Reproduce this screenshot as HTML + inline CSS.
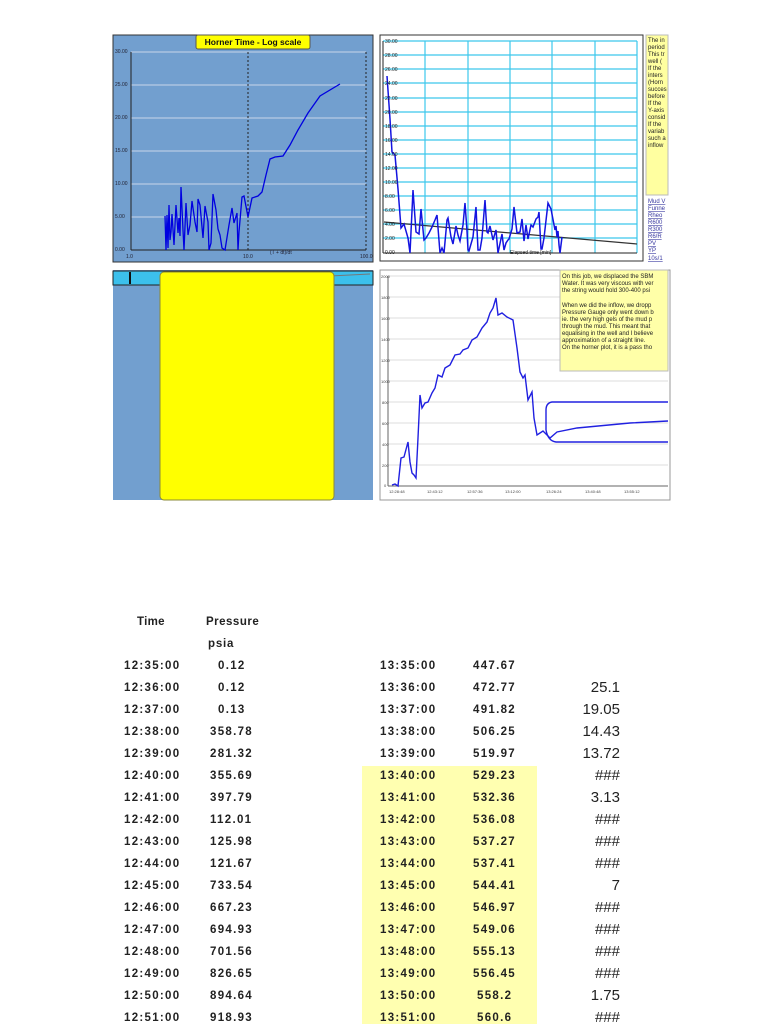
<!DOCTYPE html>
<html><head><meta charset="utf-8"><style>
body{margin:0;width:768px;height:1024px;background:#fff;position:relative;overflow:hidden;font-family:"Liberation Sans",sans-serif}
.a{position:absolute}
.t{position:absolute;font-size:11.5px;font-weight:bold;color:#222;letter-spacing:1.3px;white-space:nowrap}
.r{position:absolute;font-size:15px;color:#222;white-space:nowrap;text-align:right;width:60px;left:560px}
</style></head><body>
<svg class="a" style="left:0;top:0" width="768" height="510" font-family="Liberation Sans,sans-serif">
<rect x="113" y="35" width="260" height="227" fill="#729fcf" stroke="#333" stroke-width="1"/>
<g stroke="#c8d6e8" stroke-width="1">
<line x1="131" y1="52" x2="366" y2="52"/><line x1="131" y1="85" x2="366" y2="85"/><line x1="131" y1="118" x2="366" y2="118"/><line x1="131" y1="151" x2="366" y2="151"/><line x1="131" y1="184" x2="366" y2="184"/><line x1="131" y1="217" x2="366" y2="217"/></g>
<line x1="248" y1="52" x2="248" y2="250" stroke="#222" stroke-dasharray="2,2"/>
<line x1="366" y1="52" x2="366" y2="250" stroke="#222" stroke-dasharray="2,2"/>
<line x1="131" y1="52" x2="131" y2="250" stroke="#222"/><line x1="131" y1="250" x2="366" y2="250" stroke="#222"/>
<g font-size="5" fill="#223"><text x="115" y="53">30.00</text><text x="115" y="86">25.00</text><text x="115" y="119">20.00</text><text x="115" y="152">15.00</text><text x="115" y="185">10.00</text><text x="115" y="218">5.00</text><text x="115" y="251">0.00</text>
<text x="126" y="258">1.0</text><text x="243" y="258">10.0</text><text x="360" y="258">100.0</text><text x="270" y="254">(T + dt)/dt</text></g>
<polyline fill="none" stroke="#0000e0" stroke-width="1.3" points="165,216 166,250 167,215 168,248 169,205 170,240 171,232 172,214 174,245 176,205 178,233 179,218 180,236 181,187 183,230 184,250 186,203 188,235 190,225 192,201 195,222 197,232 198,199 200,205 203,238 205,206 208,222 209,250 211,243 213,194 216,210 218,229 220,235 222,248 225,250 229,225 232,208 234,223 237,213 238,250 239,232 242,197 244,196 248,217 252,198 258,196 262,192 266,175 270,159 275,157 283,156 290,145 298,130 308,113 320,96 340,84"/>
<rect x="196" y="35" width="114" height="14" rx="2" fill="#ffff00" stroke="#555"/>
<text x="253" y="45" font-size="8.5" font-weight="bold" text-anchor="middle" fill="#111">Horner Time - Log scale</text>
<rect x="380" y="35" width="263" height="226" fill="#fff" stroke="#333"/>
<g stroke="#3cc8ec" stroke-width="1.2">
<line x1="383" y1="41" x2="637" y2="41"/><line x1="383" y1="55" x2="637" y2="55"/><line x1="383" y1="69" x2="637" y2="69"/><line x1="383" y1="83" x2="637" y2="83"/><line x1="383" y1="98" x2="637" y2="98"/><line x1="383" y1="112" x2="637" y2="112"/><line x1="383" y1="126" x2="637" y2="126"/><line x1="383" y1="140" x2="637" y2="140"/><line x1="383" y1="154" x2="637" y2="154"/><line x1="383" y1="168" x2="637" y2="168"/><line x1="383" y1="182" x2="637" y2="182"/><line x1="383" y1="196" x2="637" y2="196"/><line x1="383" y1="210" x2="637" y2="210"/><line x1="383" y1="224" x2="637" y2="224"/><line x1="383" y1="238" x2="637" y2="238"/>
<line x1="425" y1="41" x2="425" y2="253"/><line x1="468" y1="41" x2="468" y2="253"/><line x1="510" y1="41" x2="510" y2="253"/><line x1="552" y1="41" x2="552" y2="253"/><line x1="595" y1="41" x2="595" y2="253"/><line x1="637" y1="41" x2="637" y2="253"/></g>
<line x1="383" y1="41" x2="383" y2="253" stroke="#222"/><line x1="383" y1="253" x2="637" y2="253" stroke="#222"/>
<line x1="384" y1="222" x2="637" y2="244" stroke="#333" stroke-width="1.2"/>
<polyline fill="none" stroke="#1414e0" stroke-width="1.5" points="387,76 390,119 392,152 395,155 398,189 401,228 404,224 408,238 410,253 413,190 416,232 419,234 421,209 424,240 426,238 429,233 432,227 435,220 437,215 440,253 442,248 444,253 447,220 448,218 451,237 453,244 456,226 458,235 460,241 463,225 465,203 467,231 468,250 469,251 473,237 476,207 478,250 480,250 482,238 485,200 487,232 488,233 490,226 493,240 496,230 498,253 502,234 504,250 506,243 508,240 509,239 512,229 514,207 517,233 520,232 522,219 524,241 526,225 528,239 531,225 533,227 536,219 538,217 539,212 541,249 542,249 544,238 548,203 551,209 555,230 556,226 557,237 558,231 559,245 560,253 562,237"/>
<g font-size="5" fill="#222"><text x="385" y="43">30.00</text><text x="385" y="57">28.00</text><text x="385" y="71">26.00</text><text x="385" y="85">24.00</text><text x="385" y="100">22.00</text><text x="385" y="114">20.00</text><text x="385" y="128">18.00</text><text x="385" y="142">16.00</text><text x="385" y="156">14.00</text><text x="385" y="170">12.00</text><text x="385" y="184">10.00</text><text x="385" y="198">8.00</text><text x="385" y="212">6.00</text><text x="385" y="226">4.00</text><text x="385" y="240">2.00</text><text x="385" y="254">0.00</text><text x="510" y="254">Elapsed time [min]</text></g>
<rect x="646" y="35" width="22" height="160" fill="#ffffa0" stroke="#bbb"/>
<g font-size="6" fill="#222"><text x="648" y="42">The in</text><text x="648" y="49">period</text><text x="648" y="56">This tr</text><text x="648" y="63">well (</text><text x="648" y="70">If the</text><text x="648" y="77">inters</text><text x="648" y="84">(Horn</text><text x="648" y="91">succes</text><text x="648" y="98">before</text><text x="648" y="105">If the</text><text x="648" y="112">Y-axis</text><text x="648" y="119">consid</text><text x="648" y="126">If the</text><text x="648" y="133">variab</text><text x="648" y="140">such a</text><text x="648" y="147">inflow</text></g>
<g font-size="6" fill="#3838a0" text-decoration="underline"><text x="648" y="203">Mud V</text><text x="648" y="210">Funne</text><text x="648" y="217">Rheo</text><text x="648" y="224">R600</text><text x="648" y="231">R300</text><text x="648" y="238">R6/R</text><text x="648" y="245">PV</text><text x="648" y="252">YP</text><text x="648" y="260">10s/1</text></g>
<rect x="113" y="270" width="260" height="230" fill="#729fcf"/>
<rect x="113" y="271" width="260" height="14" fill="#3cc0ec" stroke="#222"/>
<line x1="130" y1="272" x2="130" y2="284" stroke="#111" stroke-width="2"/>
<line x1="330" y1="276" x2="370" y2="274" stroke="#777"/>
<rect x="160" y="272" width="174" height="228" rx="4" fill="#ffff00" stroke="#8a8a3a"/>
<rect x="380" y="270" width="290" height="230" fill="#fff" stroke="#999"/>
<g stroke="#ddd"><line x1="388" y1="276" x2="668" y2="276"/><line x1="388" y1="297" x2="668" y2="297"/><line x1="388" y1="318" x2="668" y2="318"/><line x1="388" y1="339" x2="668" y2="339"/><line x1="388" y1="360" x2="668" y2="360"/><line x1="388" y1="381" x2="668" y2="381"/><line x1="388" y1="402" x2="668" y2="402"/><line x1="388" y1="423" x2="668" y2="423"/><line x1="388" y1="444" x2="668" y2="444"/><line x1="388" y1="465" x2="668" y2="465"/></g>
<line x1="388" y1="276" x2="388" y2="486" stroke="#666"/><line x1="388" y1="486" x2="668" y2="486" stroke="#666"/>
<polyline fill="none" stroke="#2020e0" stroke-width="1.4" points="392,485 395,484 398,486 401,458 404,457 408,442 410,462 412,473 414,475 416,478 418,438 420,395 422,408 425,403 428,402 432,393 435,388 438,375 442,377 445,368 450,365 455,355 460,354 463,350 468,348 472,340 477,337 482,328 487,322 490,313 493,308 496,298 498,315 502,313 507,317 513,320 517,348 520,372 523,378 525,375 528,400 532,392 534,418 537,435 540,433 543,431 547,435 550,438 557,432 577,428 630,423 668,421"/>
<path d="M546,430 L546,410 Q546,403 552,402 L668,402 M546,430 Q548,441 556,442 L668,442" fill="none" stroke="#2020e0" stroke-width="1.4"/>
<g font-size="4" fill="#444"><text x="381" y="278">2000</text><text x="381" y="299">1800</text><text x="381" y="320">1600</text><text x="381" y="341">1400</text><text x="381" y="362">1200</text><text x="381" y="383">1000</text><text x="382" y="404">800</text><text x="382" y="425">600</text><text x="382" y="446">400</text><text x="382" y="467">200</text><text x="384" y="487">0</text>
<text x="389" y="493">12:28:48</text><text x="427" y="493">12:43:12</text><text x="467" y="493">12:57:36</text><text x="505" y="493">13:12:00</text><text x="546" y="493">13:26:24</text><text x="585" y="493">13:40:48</text><text x="624" y="493">13:55:12</text></g>
<rect x="560" y="270" width="108" height="101" fill="#ffffa8" stroke="#bbb"/>
<g font-size="6" fill="#222"><text x="562" y="278">On this job, we displaced the SBM</text><text x="562" y="285">Water. It was very viscous with ver</text><text x="562" y="292">the string would hold 300-400 psi</text><text x="562" y="307">When we did the inflow, we dropp</text><text x="562" y="314">Pressure Gauge only went down b</text><text x="562" y="321">ie. the very high gels of the mud p</text><text x="562" y="328">through the mud. This meant that</text><text x="562" y="335">equalising in the well and I believe</text><text x="562" y="342">approximation of a straight line.</text><text x="562" y="349">On the horner plot, it is a pass tho</text></g>
</svg>
<div class="a" style="left:362px;top:766px;width:175px;height:258px;background:#ffffb0"></div>
<div class="t" style="left:137px;top:616px;letter-spacing:0.3px">Time</div>
<div class="t" style="left:206px;top:616px;letter-spacing:0.5px">Pressure</div>
<div class="t" style="left:208px;top:638px;letter-spacing:0.8px">psia</div>
<div id="rows"></div>
<script>
var L=[["12:35:00","0.12","13:35:00","447.67",""],["12:36:00","0.12","13:36:00","472.77","25.1"],["12:37:00","0.13","13:37:00","491.82","19.05"],["12:38:00","358.78","13:38:00","506.25","14.43"],["12:39:00","281.32","13:39:00","519.97","13.72"],["12:40:00","355.69","13:40:00","529.23","###"],["12:41:00","397.79","13:41:00","532.36","3.13"],["12:42:00","112.01","13:42:00","536.08","###"],["12:43:00","125.98","13:43:00","537.27","###"],["12:44:00","121.67","13:44:00","537.41","###"],["12:45:00","733.54","13:45:00","544.41","7"],["12:46:00","667.23","13:46:00","546.97","###"],["12:47:00","694.93","13:47:00","549.06","###"],["12:48:00","701.56","13:48:00","555.13","###"],["12:49:00","826.65","13:49:00","556.45","###"],["12:50:00","894.64","13:50:00","558.2","1.75"],["12:51:00","918.93","13:51:00","560.6","###"]];
var h="";for(var i=0;i<L.length;i++){var y=660+i*22;var r=L[i];
var pl=r[1].length<=4?218:210;var p2=r[3].length<=5?477:473;
h+='<div class="t" style="left:124px;top:'+y+'px">'+r[0]+'</div><div class="t" style="left:'+pl+'px;top:'+y+'px">'+r[1]+'</div><div class="t" style="left:380px;top:'+y+'px">'+r[2]+'</div><div class="t" style="left:'+p2+'px;top:'+y+'px">'+r[3]+'</div><div class="r" style="top:'+(y-3)+'px">'+r[4]+'</div>';}
document.getElementById("rows").innerHTML=h;
</script>
</body></html>
